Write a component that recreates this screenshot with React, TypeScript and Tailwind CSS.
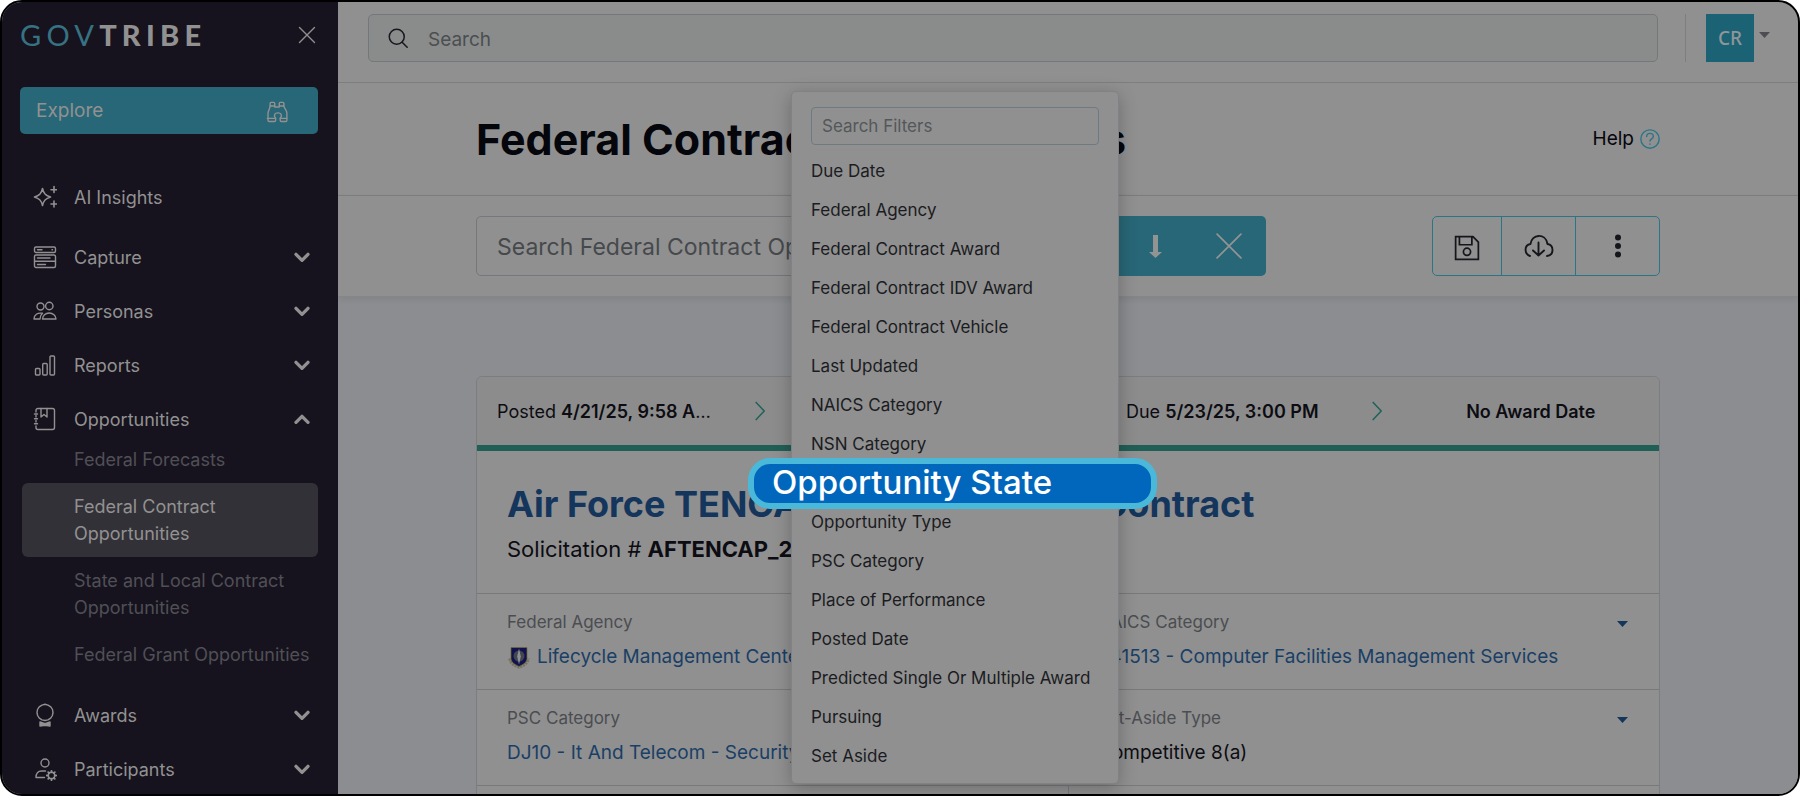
import type { ReactNode } from "react";

const filters = [
  "Due Date",
  "Federal Agency",
  "Federal Contract Award",
  "Federal Contract IDV Award",
  "Federal Contract Vehicle",
  "Last Updated",
  "NAICS Category",
  "NSN Category",
  "Opportunity State",
  "Opportunity Type",
  "PSC Category",
  "Place of Performance",
  "Posted Date",
  "Predicted Single Or Multiple Award",
  "Pursuing",
  "Set Aside",
];

const subItems = [
  { label: "Federal Forecasts" },
  { label: "Federal Contract Opportunities", active: true },
  { label: "State and Local Contract Opportunities" },
  { label: "Federal Grant Opportunities" },
];

function Svg({ className, box = "0 0 24 24", width = 1.4, children }: {
  className: string;
  box?: string;
  width?: number;
  children: ReactNode;
}) {
  return (
    <svg
      className={className}
      viewBox={box}
      fill="none"
      stroke="currentColor"
      strokeWidth={width}
      strokeLinecap="round"
      strokeLinejoin="round"
      aria-hidden="true"
    >
      {children}
    </svg>
  );
}

const icons = {
  sparkle: (
    <>
      <path d="M9.500 3.500c1 5 3 7 8 8.500c-5 1.500-7 3.500-8 8.500c-1-5-3-7-8-8.500c5-1.500 7-3.500 8-8.500z" />
      <path d="M21 1.500v6M18 4.700h6M21 16v6M18 19h6" />
    </>
  ),
  capture: (
    <>
      <rect x="1.500" y="2" width="21" height="5.500" rx="1.500" />
      <rect x="1.500" y="10" width="21" height="12.500" rx="1.500" />
      <path d="M1.500 16.300h21M4.500 4.700h4.500M19 4.700h.5M4.500 13h12.500M4.500 19.500h8" />
    </>
  ),
  personas: (
    <>
      <circle cx="7.500" cy="7.500" r="3.500" />
      <circle cx="16.300" cy="7" r="3.700" />
      <path d="M9.500 20c0-3.500 3-6 6.700-6s6.800 2.500 6.800 6z" />
      <path d="M9.500 14.300c-5-1-8.500 1.700-8.500 5.700h6c0-2.300 1-4.500 2.500-5.700z" />
    </>
  ),
  reports: (
    <>
      <rect x="2.500" y="15.500" width="4.500" height="6.500" rx="1" />
      <rect x="9.700" y="10.500" width="4.500" height="11.500" rx="1" />
      <rect x="17" y="3" width="4.500" height="19" rx="1" />
    </>
  ),
  notebook: (
    <>
      <path d="M3 5v-1.500a2 2 0 0 1 2-2h14.500a2 2 0 0 1 2 2v17a2 2 0 0 1-2 2h-14.500a2 2 0 0 1-2-2v-1.500M3 8.500v1.500M3 13.500v1.500" />
      <path d="M1.500 7h3M1.500 11.800h3M1.500 16.800h3M8 1.500v8.500l3-2.500l3 2.500v-8.500" />
    </>
  ),
  award: (
    <>
      <path d="M12 1.300l3 .8l2.800 1.700l1.700 2.700l.5 3l-.6 3l-1.700 2.700l-2.700 1.700l-3 .6l-3-.6l-2.700-1.700l-1.700-2.700l-.6-3l.5-3l1.700-2.700l2.800-1.700z" />
      <path d="M7 19l5 1.700l5-1.700v4l-5-.8l-5 .8z" fill="currentColor" />
    </>
  ),
  participant: (
    <>
      <circle cx="12" cy="6" r="4" />
      <path d="M11.500 20.500h-8.500c0-4 2-6.500 5.500-6.500h4" />
      <circle cx="18.500" cy="18.500" r="3.200" />
      <path d="M18.500 13.800v1.500M18.500 21.700v1.500M13.800 18.500h1.500M21.700 18.500h1.500M15.200 15.200l1 1M20.800 20.800l1 1M15.200 21.800l1-1M20.800 16.200l1-1" strokeWidth="1.800" />
    </>
  ),
};

function NavHeader({ icon, label, open }: { icon: ReactNode; label: string; open?: boolean }) {
  return (
    <button type="button" aria-expanded={!!open} className="flex h-[34px] w-full items-center pr-2 pl-[13px] text-left text-[18px]">
      <Svg className="mr-[17px] size-6 shrink-0">{icon}</Svg>
      <span className="flex-1">{label}</span>
      <Svg className="size-4" width={5}>
        {open ? <path d="M3 17l9-9l9 9" /> : <path d="M3 8l9 9l9-9" />}
      </Svg>
    </button>
  );
}

function Sidebar() {
  return (
    <aside className="w-[336px] shrink-0 overflow-hidden bg-[#16131e] pr-5 pl-[18px] text-[#929191]">
      <div className="flex h-[66px] items-center justify-between pr-0.5">
        <div className="font-[Lato] text-[29px] leading-8 tracking-[0.18em]">
          <span className="font-normal text-[#377283]">GOV</span>
          <span className="font-black">TRIBE</span>
        </div>
        <button type="button" aria-label="Close menu">
          <Svg className="size-[18px]" width={1.800}><path d="M2 2l20 20M22 2l-20 20" /></Svg>
        </button>
      </div>
      <button type="button" className="mt-[19px] flex h-[47px] w-full items-center justify-between rounded-[5px] bg-[#286777] pt-0.5 pr-[30px] pl-4 text-[19px]">
        Explore
        <Svg className="size-[22px]" width={1.500}>
          <path d="M4.500 6v-3.500a1 1 0 0 1 1-1h3a1 1 0 0 1 1 1v4h5v-4a1 1 0 0 1 1-1h3a1 1 0 0 1 1 1v3.500l2.500 4.500c.6 1 .8 2 .8 3v7.500a1.300 1.300 0 0 1-1.300 1.300h-4.700a1.300 1.300 0 0 1-1.300-1.300v-2.500c2-1.500 2-5.500-2.500-5.500s-4.500 4-2.500 5.500v2.500a1.300 1.300 0 0 1-1.300 1.300h-5.700a1.300 1.300 0 0 1-1.300-1.300v-7.500c0-1 .2-2 .8-3z" />
          <path d="M4.500 5.500h5M14.500 5.500h5M1.500 19h8M15.500 19h7" />
        </Svg>
      </button>
      <nav className="mt-[46px]">
        <a href="#ai" className="mb-[26px] flex h-[34px] items-center pl-[13px] text-[18px]">
          <Svg className="mr-[17px] size-6" width={1.600}>{icons.sparkle}</Svg>
          AI Insights
        </a>
        <div className="flex flex-col gap-5">
          <NavHeader icon={icons.capture} label="Capture" />
          <NavHeader icon={icons.personas} label="Personas" />
          <NavHeader icon={icons.reports} label="Reports" />
          <div>
            <NavHeader icon={icons.notebook} label="Opportunities" open />
            <ul className="pl-0.5 text-[18px] leading-[27px]">
              {subItems.map((item) => (
                <li key={item.label}>
                  <a
                    href="#opportunities"
                    className={`block rounded-md py-2.5 pl-[52px] ${
                      item.active ? "bg-[#333138]" : "text-[#504f56]"
                    }`}
                  >
                    {item.label}
                  </a>
                </li>
              ))}
            </ul>
          </div>
          <NavHeader icon={icons.award} label="Awards" />
          <NavHeader icon={icons.participant} label="Participants" />
        </div>
      </nav>
    </aside>
  );
}

function TopBar() {
  return (
    <header className="flex h-[81px] shrink-0 border-b border-[#7d7e80] pt-3 pr-7 pl-[30px]">
      <label className="flex h-12 flex-1 items-center rounded-[5px] border border-[#74787c] bg-[#898c8b] pl-[19px]">
        <Svg className="size-5 text-[#17171d]" width={1.800}>
          <circle cx="10.500" cy="10.500" r="9" />
          <path d="M17 17l6 6" />
        </Svg>
        <input aria-label="Search" placeholder="Search" className="ml-5 h-full flex-1 bg-transparent pt-0.5 text-[19px] outline-none placeholder:text-[#4c4e51]" />
      </label>
      <div className="ml-[27px] h-12 w-px bg-[#7d7e80]" />
      <button type="button" className="ml-5 flex h-12 items-center gap-[5px]">
        <span className="flex size-12 items-center justify-center bg-[#1b6274] font-['Noto_Sans'] text-[19px] font-medium text-[#8f9697]">CR</span>
        <svg className="mb-1.5 h-1.5 w-[11px] fill-[#4d4e52]" viewBox="0 0 11 6" aria-hidden="true"><path d="M0 0h11l-5.500 6z" /></svg>
      </button>
    </header>
  );
}

function FilterMenu() {
  return (
    <div className="absolute top-[89px] left-[453px] z-10 w-[328px] rounded-[5px] border border-[#818283] bg-[#909090] px-[19px] pt-[15px] pb-[7px] text-[#1b1c22] shadow-[0_4px_18px_rgba(0,0,0,0.25)]">
      <input
        aria-label="Search Filters"
        placeholder="Search Filters"
        className="mb-[7px] h-[38px] w-full rounded border border-[#6f7a80] bg-transparent px-2.5 text-[17px] outline-none placeholder:text-[#54575a]"
      />
      <ul className="text-[17px]">
        {filters.map((label) => (
          <li key={label} className="relative h-[39px]">
            {label === "Opportunity State" ? (
              <button
                type="button"
                className="absolute -top-1.5 -left-[63px] h-[51px] w-[409px] rounded-[22px] border-[6px] border-[#4ab8d8] bg-[#0067bd] pb-1 pl-[18px] text-left text-[33px] leading-9 font-medium text-white"
              >
                {label}
              </button>
            ) : (
              <button type="button" className="h-full w-full text-left whitespace-nowrap">{label}</button>
            )}
          </li>
        ))}
      </ul>
    </div>
  );
}

function Chevron() {
  return (
    <div className="flex w-[52px] shrink-0 justify-center">
      <svg className="h-5 w-2.5 stroke-[#1d635b]" viewBox="0 0 10 20" fill="none" strokeWidth="1.500" aria-hidden="true">
        <path d="M.7 1l8.500 9l-8.500 9" />
      </svg>
    </div>
  );
}

function Caret() {
  return (
    <button type="button" aria-label="Expand" className="self-start pt-[13px]">
      <svg className="h-1.5 w-[11px] fill-[#14355c]" viewBox="0 0 11 6" aria-hidden="true"><path d="M0 0h11l-5.500 6z" /></svg>
    </button>
  );
}

function AgencySeal() {
  return (
    <svg className="mr-1.5 size-6" viewBox="0 0 24 24" aria-hidden="true">
      <path d="M2.500 13.500c.5 5 5 7.500 9.500 9c4.500-1.500 9-4 9.500-9" fill="none" stroke="#77735f" strokeWidth="2.400" strokeDasharray="2.200 .8" />
      <path d="M4 2.500h16v11c0 4-4 6-8 8c-4-2-8-4-8-8z" fill="#12124f" stroke="#6f6a3a" strokeWidth=".7" />
      <circle cx="12" cy="11" r="5.500" fill="#43464d" />
      <path d="M12 3.500l1.800 8l-1.800 8l-1.800-8z" fill="#8d9096" />
    </svg>
  );
}

function Field({ label, caret, children }: { label: string; caret?: boolean; children: ReactNode }) {
  return (
    <div className="flex h-24 w-1/2 justify-between border-t border-[#77797c] pt-3.5 pr-[31px] pl-[30px]">
      <div className="min-w-0 whitespace-nowrap">
        <div className="text-[17px] leading-7 text-[#4b4d50]">{label}</div>
        <div className="mt-[3px] flex h-9 items-center text-[19px]">{children}</div>
      </div>
      {caret && <Caret />}
    </div>
  );
}

function OpportunityCard() {
  return (
    <article className="mx-auto mt-[79px] w-full max-w-[1184px] rounded-t-md border border-[#7b7e81] bg-[#909090]">
      <div className="flex h-[68px] items-center rounded-t-md bg-[#8c8c8c] text-[18px] text-[#0c0c12]">
        <div className="min-w-0 flex-1">
          <div className="mr-4 ml-5 truncate">Posted <b className="font-semibold">4/21/25, 9:58 AM EDT</b></div>
        </div>
        <Chevron />
        <div className="min-w-0 flex-1 truncate text-center">Updated <b className="font-semibold">4/21/25</b></div>
        <Chevron />
        <div className="min-w-0 flex-1 text-center whitespace-nowrap">Due <b className="font-semibold">5/23/25, 3:00 PM</b></div>
        <Chevron />
        <div className="min-w-0 flex-1 text-center"><b className="font-semibold">No Award Date</b></div>
      </div>
      <div className="h-1.5 bg-[#205f56]" />
      <div className="h-[142px] px-[30px] pt-[30px]">
        <h2 className="text-[36px] leading-[46px] font-bold whitespace-nowrap text-[#14355c]">
          <a href="#opportunity">Air Force TENCAP BPA Follow-On Contract</a>
        </h2>
        <p className="text-[22px] leading-[44px] text-[#0c0c12]">Solicitation # <b className="font-bold">AFTENCAP_2025</b></p>
      </div>
      <div className="flex">
        <Field label="Federal Agency">
          <AgencySeal />
          <a href="#agency" className="text-[#1a3f66]">Lifecycle Management Center</a>
        </Field>
        <Field label="NAICS Category" caret>
          <a href="#naics" className="text-[#1a3f66]">541513 - Computer Facilities Management Services</a>
        </Field>
      </div>
      <div className="flex">
        <Field label="PSC Category">
          <a href="#psc" className="text-[#1a3f66]">DJ10 - It And Telecom - Security</a>
        </Field>
        <Field label="Set-Aside Type" caret>
          <span className="text-[#0c0c12]">Competitive 8(a)</span>
        </Field>
      </div>
      <div className="flex h-16 border-t border-[#77797c]">
        <div className="flex-1 border-r border-[#77797c]" />
        <div className="flex-1" />
      </div>
    </article>
  );
}

export default function App() {
  return (
    <div className="h-screen bg-white font-[Inter,sans-serif]">
      <div className="flex h-full overflow-hidden rounded-[22px] border-2 border-black bg-[#909090]">
        <Sidebar />
        <div className="relative flex min-w-0 flex-1 flex-col overflow-hidden">
          <TopBar />
          <section className="h-[113px] shrink-0 border-b border-[#7d7e80]">
            <div className="mx-auto flex h-full w-full max-w-[1184px] items-center justify-between">
              <h1 className="text-[43px] font-bold text-[#05050c]">Federal Contract Opportunities</h1>
              <a href="#help" className="flex items-center gap-1.5 text-[19px] text-[#05050c]">
                Help
                <Svg className="size-5 text-[#2c7587]" width={1.700}>
                  <circle cx="12" cy="12" r="11" />
                  <path d="M8 9c0-5 8-5 8 0c0 3-4 2.500-4 5.500M12 18v.3" />
                </Svg>
              </a>
            </div>
          </section>
          <section className="z-[1] h-[101px] shrink-0 border-b border-[#858687] bg-[#909090] shadow-[0_2px_6px_rgba(0,0,0,0.08)]">
            <div className="mx-auto flex h-full w-full max-w-[1184px] items-center justify-between">
              <div className="flex h-[60px] w-[790px]">
                <input
                  aria-label="Search Federal Contract Opportunities"
                  placeholder="Search Federal Contract Opportunities"
                  className="min-w-0 flex-1 rounded-l-[5px] border border-[#74787c] bg-transparent pt-0.5 pl-5 text-[23px] outline-none placeholder:text-[#46494c]"
                />
                <div className="flex w-[260px] items-center justify-end gap-[54px] rounded-r-[5px] bg-[#286777] pr-6 text-[#929494]">
                  <button type="button" aria-label="Sort descending">
                    <svg className="h-[23px] w-[13px] fill-current" viewBox="0 0 13 23" aria-hidden="true"><path d="M4 0h5v17h4l-6.500 6l-6.500-6h4z" /></svg>
                  </button>
                  <button type="button" aria-label="Clear">
                    <Svg className="size-[26px]" width={1.600}><path d="M1 1l22 22M23 1l-22 22" /></Svg>
                  </button>
                </div>
              </div>
              <div className="flex h-[60px] w-[228px] divide-x divide-[#2c7587] rounded-[5px] border border-[#2c7587] text-[#15161c]">
                <button type="button" aria-label="Save" className="flex w-[69px] items-center justify-center pt-1">
                  <Svg className="size-[26px]" width={1.600}>
                    <path d="M1.500 1.500h16l5 5v16h-21zM5 1.500v7.500h11.500v-7.500" strokeLinejoin="miter" />
                    <circle cx="12" cy="15.500" r="3.300" />
                  </Svg>
                </button>
                <button type="button" aria-label="Download" className="flex w-[74px] items-center justify-center">
                  <Svg className="h-6 w-[30px]" box="0 0 30 24" width={1.900}>
                    <path d="M6 22c-6-2.500-6-11 .5-12c1-10 15-11.500 17 0c6.500 1 7 11-.5 12M14.500 8.500v13M9 16.500l5.500 5l5.500-5" />
                  </Svg>
                </button>
                <button type="button" aria-label="More" className="flex flex-1 items-center justify-center">
                  <svg className="h-6 w-1.5 fill-current" viewBox="0 0 6 24" aria-hidden="true">
                    <circle cx="3" cy="3.500" r="3" /><circle cx="3" cy="12" r="3" /><circle cx="3" cy="20.500" r="3" />
                  </svg>
                </button>
              </div>
            </div>
          </section>
          <main className="flex-1 overflow-hidden bg-[#8b8d90]">
            <OpportunityCard />
          </main>
          <FilterMenu />
        </div>
      </div>
    </div>
  );
}
